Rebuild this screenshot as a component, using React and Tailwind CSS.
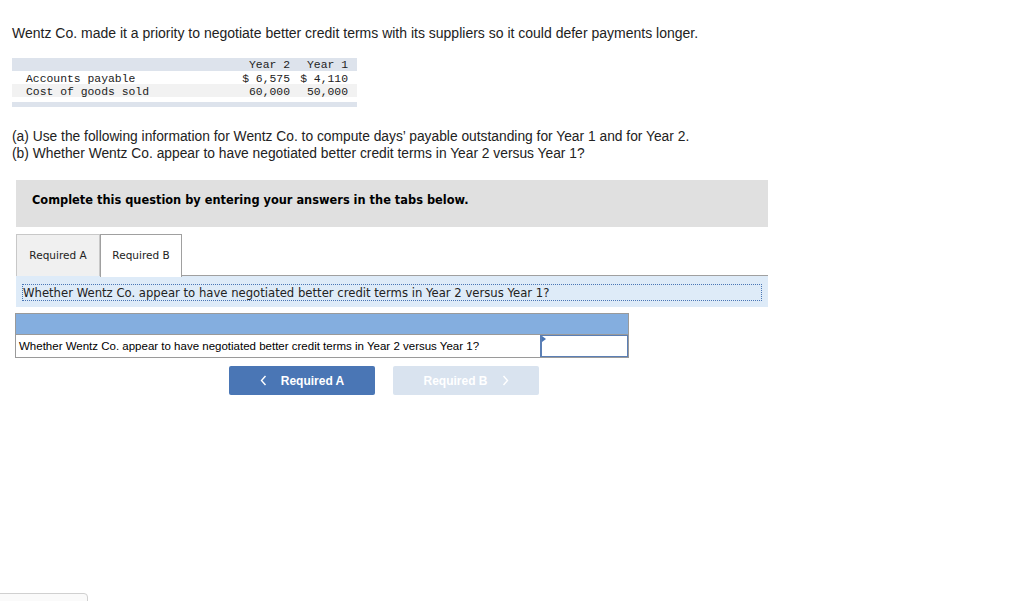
import React from "react";

const sans = { fontFamily: '"Liberation Sans", Arial, sans-serif' };
const mono = { fontFamily: '"Liberation Mono", "Courier New", monospace' };
const verdana = { fontFamily: '"DejaVu Sans", Verdana, sans-serif' };

const Chevron = ({ dir = "left", className = "" }) => (
  <svg width="7" height="11" viewBox="0 0 7 11" className={className} fill="none" stroke="currentColor" strokeWidth="1.4">
    {dir === "left" ? <path d="M5.5 1 L1.5 5.5 L5.5 10" /> : <path d="M1.5 1 L5.5 5.5 L1.5 10" />}
  </svg>
);

const App = () => {
  return (
    <div className="w-[1024px] h-[601px] bg-white overflow-hidden relative text-[#222]" style={sans}>
      {/* Intro */}
      <p className="absolute left-[12px] top-[23px] text-[14px]">
        Wentz Co. made it a priority to negotiate better credit terms with its suppliers so it could defer payments longer.
      </p>

      {/* Data table */}
      <div className="absolute left-[12px] top-[58px] w-[345px] text-[11.4px] leading-[13px]" style={mono}>
        <div className="flex h-[13px] bg-[#dde3ec] pt-px">
          <div className="w-[220px]"></div>
          <div className="w-[58px] text-right">Year 2</div>
          <div className="w-[58px] text-right">Year 1</div>
        </div>
        <div className="flex h-[13px] bg-white pt-[2px]">
          <div className="w-[220px] pl-[14px]">Accounts payable</div>
          <div className="w-[58px] text-right">$ 6,575</div>
          <div className="w-[58px] text-right">$ 4,110</div>
        </div>
        <div className="flex h-[13px] bg-[#f2f2f2] pt-[2px]">
          <div className="w-[220px] pl-[14px]">Cost of goods sold</div>
          <div className="w-[58px] text-right">60,000</div>
          <div className="w-[58px] text-right">50,000</div>
        </div>
        <div className="h-[5px] mt-[5px] bg-[#dde3ec]"></div>
      </div>

      {/* Questions */}
      <div className="absolute left-[12px] top-[128px] text-[13.8px] leading-[17px]">
        <p>(a) Use the following information for Wentz Co. to compute days’ payable outstanding for Year 1 and for Year 2.</p>
        <p>(b) Whether Wentz Co. appear to have negotiated better credit terms in Year 2 versus Year 1?</p>
      </div>

      {/* Instruction box */}
      <div className="absolute left-[16px] top-[180px] w-[752px] h-[47px] bg-[#e0e0e0] pl-[16px] pt-[7px]">
        <span className="text-[11.4px] font-bold text-black" style={verdana}>
          Complete this question by entering your answers in the tabs below.
        </span>
      </div>

      {/* Tabs */}
      <div className="absolute left-[16px] top-[234px] w-[752px]" style={verdana}>
        <div className="flex h-[42px] border-b border-[#a0a0a0]">
          <div className="w-[84px] h-[42px] bg-[#f0f0f0] border border-[#c8c8c8] border-b-0 flex items-center justify-center text-[10.5px] text-[#222]">
            Required A
          </div>
          <div className="w-[82px] h-[43px] bg-white border border-[#a0a0a0] border-b-0 -mb-px flex items-center justify-center text-[10.5px] text-[#222]">
            Required B
          </div>
        </div>
        <div className="h-[31px] bg-[#deebf8] px-[6px] pt-[8px]">
          <div className="border border-dotted border-[#4a76b5] h-[17px] flex items-center text-[11.65px] text-[#222] pt-[2px]">
            Whether Wentz Co. appear to have negotiated better credit terms in Year 2 versus Year 1?
          </div>
        </div>
      </div>

      {/* Answer table */}
      <div className="absolute left-[15px] top-[313px] w-[614px] border border-[#9a9a9a]">
        <div className="h-[20px] bg-[#84aedf]"></div>
        <div className="flex h-[23px] border-t border-[#9a9a9a] bg-white">
          <div className="flex-1 flex items-center pl-[3px] pt-px text-[11.5px] text-black">
            Whether Wentz Co. appear to have negotiated better credit terms in Year 2 versus Year 1?
          </div>
          <div className="w-[88px] border-l-2 border-[#5b7fb5] border-t border-b border-r relative">
            <div className="absolute left-0 top-0 w-0 h-0 border-t-[3px] border-b-[3px] border-l-[4px] border-t-transparent border-b-transparent border-l-[#4a76b5]"></div>
          </div>
        </div>
      </div>

      {/* Nav buttons */}
      <div className="absolute left-[229px] top-[366px] flex gap-[18px]">
        <div className="w-[146px] h-[29px] rounded-[2px] bg-[#4a76b5] flex items-center justify-center text-white text-[12px] font-bold">
          <Chevron dir="left" className="mr-[14px]" />
          Required A
        </div>
        <div className="w-[146px] h-[29px] rounded-[2px] bg-[#d9e3ef] flex items-center justify-center text-white text-[12px] font-bold">
          Required B
          <Chevron dir="right" className="ml-[14px]" />
        </div>
      </div>

      {/* Bottom partial element */}
      <div className="absolute left-[-4px] top-[593px] w-[92px] h-[20px] border border-[#d0d0d0] rounded-[4px] bg-[#fafafa]"></div>
    </div>
  );
};

export default App;
